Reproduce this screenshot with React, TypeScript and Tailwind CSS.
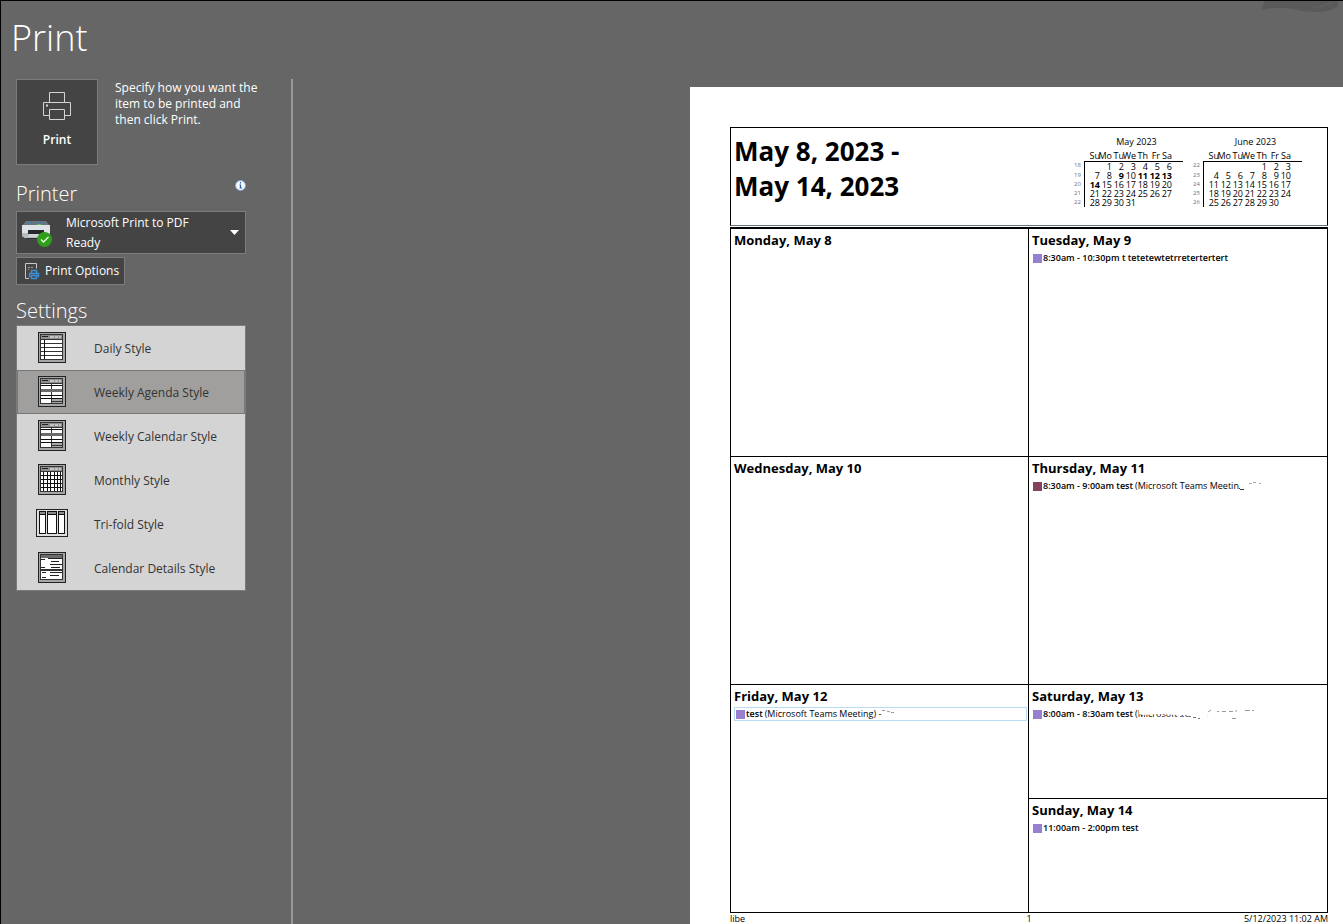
import { useState } from "react";
import clsx from "clsx";

type StyleId = "daily" | "agenda" | "weekly" | "monthly" | "trifold" | "details";

const printStyles: { id: StyleId; label: string }[] = [
  { id: "daily", label: "Daily Style" },
  { id: "agenda", label: "Weekly Agenda Style" },
  { id: "weekly", label: "Weekly Calendar Style" },
  { id: "monthly", label: "Monthly Style" },
  { id: "trifold", label: "Tri-fold Style" },
  { id: "details", label: "Calendar Details Style" },
];

const weekdays = ["Su", "Mo", "Tu", "We", "Th", "Fr", "Sa"];

function PrinterIcon() {
  return (
    <svg width="30" height="30" viewBox="0 0 30 30" fill="none" stroke="#d4d4d4">
      <path d="M7.500 11.500V1.500h15v10" />
      <path d="M7.500 24.500H1.500v-13h27v13h-6" />
      <path d="M7.500 18.500h15v10h-15z" />
      <path d="M4 14.500h2" strokeWidth="2" />
    </svg>
  );
}

function PrinterReadyIcon() {
  return (
    <svg width="32" height="30" viewBox="0 0 32 30">
      <path d="M5 3h20l4 5H1z" fill="#6b737b" />
      <path d="M7 4.500h16" stroke="#2f7fb5" strokeDasharray="4 2" />
      <path d="M16 6.500h4" stroke="#5fc34a" />
      <path d="M1 7h28v11l-3 2H4l-3-2z" fill="#dfe3e8" />
      <path d="M1 15h28v3l-3 2H4l-3-2z" fill="#b4bac1" />
      <path d="M7 12h16v4H7z" fill="#26282b" />
      <path d="M8 16h14l1 3H7z" fill="#cfd4d9" />
      <path d="M6 20h16v1H6z" fill="#2c2e31" />
      <circle cx="23.500" cy="21.500" r="7.500" fill="#2f9e1b" />
      <path d="M20 21.500l2.500 2.500 5-5" fill="none" stroke="#e8ffe2" strokeWidth="1.300" />
    </svg>
  );
}

function OptionsIcon() {
  return (
    <svg width="15" height="17" viewBox="0 0 15 17" fill="none">
      <path d="M4 15.500H.500V.500h11v5" stroke="#c9c9c9" />
      <path d="M3 4.500h2M3 6.500h1M6 4.500h2" stroke="#a0a0a0" />
      <path d="M6.500 10V7.500h5V10M5.500 13.500h-1v-3h9v3h-1M6.500 12.500h5v3h-5z" stroke="#3f8ed8" strokeWidth="1.400" />
    </svg>
  );
}

function InfoIcon() {
  return (
    <svg width="11" height="11" viewBox="0 0 11 11">
      <circle cx="5.500" cy="5.500" r="5" fill="#f4f8ff" stroke="#7f9fd0" />
      <path d="M5.500 2v1.500M4.500 5h1v3M4.500 8h2.500" stroke="#2d5fa8" strokeWidth="1.200" fill="none" />
    </svg>
  );
}

function StyleIcon({ id }: { id: StyleId }) {
  if (id === "trifold") {
    return (
      <svg width="32" height="28" viewBox="0 0 32 28" shapeRendering="crispEdges">
        <path d="M0 0h32v28H0z" fill="#222" />
        <path d="M1 1h30v26H1z" fill="#dedede" />
        <path d="M3 2h7v23H3zM11 2h10v23H11zM22 2h7v23h-7z" fill="#111" />
        <path d="M4 6h5v18H4zM12 6h8v18h-8zM23 6h5v18h-5z" fill="#fff" />
        <path d="M4 3h5v2H4zM12 3h8v2h-8zM23 3h5v2h-5z" fill="#8a8a8a" />
      </svg>
    );
  }
  return (
    <svg width="28" height="31" viewBox="0 0 28 31" shapeRendering="crispEdges">
      <path d="M0 0h28v31H0z" fill="#222" />
      <path d="M1 1h26v29H1z" fill="#a6a6a6" />
      <path d="M2 2h23v26H2z" fill="#333" />
      <path d="M3 3h21v4H3z" fill="#8f8f8f" />
      <path d="M4 4h6v1H4z" fill="#222" />
      <path d="M12 4h4v2h-4zM17 4h3v2h-3zM21 4h2v2h-2z" fill="#c4c4c4" />
      {id === "daily" && (
        <>
          <path d="M3 8h3v19H3zM7 8h17v19H7z" fill="#fff" />
          <path d="M3 11.500h21M3 15.500h21M3 19.500h21M3 23.500h21" stroke="#333" />
          <path d="M6.500 8v19" stroke="#111" strokeWidth="1" />
        </>
      )}
      {(id === "agenda" || id === "weekly") && (
        <>
          <path d="M3 8h10v19H3zM14 8h10v19H14z" fill="#fff" />
          <path d="M3 9.500h21M3 19.500h21M3 22.500h21" stroke="#111" />
          <path d="M3 13h21v3H3z" fill="#6b6b6b" />
          <path d="M14 23h10v4H14z" fill="#aaa" />
          <path d="M14 25.500h10" stroke="#333" />
        </>
      )}
      {id === "monthly" && (
        <>
          <path d="M3 8h21v19H3z" fill="#fff" />
          <path
            d="M5.500 8v19M9.500 8v19M12.500 8v19M16.500 8v19M19.500 8v19M22.500 8v19M3 11.500h21M3 15.500h21M3 19.500h21M3 23.500h21"
            stroke="#111"
          />
        </>
      )}
      {id === "details" && (
        <>
          <path d="M3 3h21v3H3z" fill="#6b6b6b" />
          <path d="M3 6h21v11H3zM3 19h21v8H3z" fill="#fff" />
          <path
            d="M3 7.500h4M10 6.500h14M13 9.500h8M12 12.500h12M13 15.500h9M3 15.500h4M4 20.500h4M12 20.500h12M12 23.500h9M4 25.500h4"
            stroke="#222"
          />
        </>
      )}
    </svg>
  );
}

type MiniProps = {
  title: string;
  firstWeek: number;
  offset: number;
  days: number;
  bold?: number[];
};

function MiniCalendar({ title, firstWeek, offset, days, bold = [] }: MiniProps) {
  const rows = Array.from({ length: 5 }, (_, r) =>
    Array.from({ length: 7 }, (_, c) => {
      const day = r * 7 + c + 1 - offset;
      return day > 0 && day <= days ? day : null;
    }),
  );

  return (
    <table className="w-[109px] table-fixed border-collapse text-[9px] leading-[9px]">
      <caption className="pb-1 pl-4 text-center leading-[10px]">{title}</caption>
      <colgroup>
        <col className="w-[10px]" />
        <col className="w-4" />
        {weekdays.slice(1).map((d) => (
          <col key={d} className="w-3" />
        ))}
        <col />
      </colgroup>
      <thead>
        <tr className="h-[10px]">
          <td />
          {weekdays.map((d) => (
            <th key={d} scope="col" className="border-b border-black p-0 align-top font-normal">
              <div className="flex justify-end">{d}</div>
            </th>
          ))}
          <td className="border-b border-black p-0" />
        </tr>
      </thead>
      <tbody>
        {rows.map((row, r) => (
          <tr key={r} className="h-[9px]">
            <th
              scope="row"
              className="border-r border-black p-0 text-left align-top text-[6px] font-normal leading-[9px] text-gray-500"
            >
              {firstWeek + r}
            </th>
            {row.map((day, c) => (
              <td key={c} className={clsx("p-0 align-bottom", day && bold.includes(day) && "font-bold")}>
                <div className="flex justify-end">{day}</div>
              </td>
            ))}
            <td className="p-0" />
          </tr>
        ))}
      </tbody>
    </table>
  );
}

type EventProps = {
  time?: string;
  title: string;
  note?: string;
  color?: string;
  selected?: boolean;
  children?: React.ReactNode;
};

function EventRow({ time, title, note, color = "bg-[#9880d0]", selected, children }: EventProps) {
  return (
    <div
      className={clsx(
        "flex h-[14px] items-center whitespace-nowrap pl-px text-[9px] leading-3",
        selected && "-mr-0.5 border border-[#b9dcf2]",
      )}
    >
      <span className={clsx("mr-px h-[9px] w-[9px] shrink-0", color)} />
      <span className="font-semibold">
        {time && `${time} `}
        {title}
      </span>
      {note && <span className="ml-0.5">{note}</span>}
      {children}
    </div>
  );
}

function DayCell({ title, children, className }: { title: string; children?: React.ReactNode; className?: string }) {
  return (
    <section className={clsx("px-[3px] pt-px", className)}>
      <h3 className="mb-px text-[13px] font-bold leading-5">{title}</h3>
      {children}
    </section>
  );
}

function Sheet() {
  return (
    <article className="mt-2 flex min-w-[640px] flex-1 flex-col bg-white pl-10 pr-[15px] pt-10 text-black">
      <header className="mb-px flex h-[99px] justify-between border border-b-gray-500 border-black pl-[3px] pr-[25px]">
        <h2 className="pt-1.5 text-[26px] font-bold leading-[35px]">
          May 8, 2023 -
          <br />
          May 14, 2023
        </h2>
        <div className="flex items-start gap-[10px] pt-[9px]">
          <MiniCalendar title="May 2023" firstWeek={18} offset={1} days={31} bold={[9, 11, 12, 13, 14]} />
          <MiniCalendar title="June 2023" firstWeek={22} offset={4} days={30} />
        </div>
      </header>
      <div className="grid flex-1 grid-cols-2 grid-rows-[228px_228px_1fr] border-x border-b border-t-2 border-black">
        <DayCell title="Monday, May 8" className="border-b border-r border-black" />
        <DayCell title="Tuesday, May 9" className="border-b border-black">
          <EventRow time="8:30am - 10:30pm" title="t tetetewtetrretertertert" />
        </DayCell>
        <DayCell title="Wednesday, May 10" className="border-b border-r border-black" />
        <DayCell title="Thursday, May 11" className="border-b border-black">
          <EventRow time="8:30am - 9:00am" title="test" note="(Microsoft Teams Meetin" color="bg-[#84425c]">
            <svg width="24" height="12" viewBox="0 0 24 12" fill="none" stroke="#777">
              <path d="M0 8l2 2M2 9.500h3" stroke="#333" />
              <path d="M10 3.500h3M14 2.500h3M20 3.500h2" stroke="#aaa" />
            </svg>
          </EventRow>
        </DayCell>
        <DayCell title="Friday, May 12" className="border-r border-black">
          <EventRow title="test" note="(Microsoft Teams Meeting) -" selected>
            <svg width="26" height="12" viewBox="0 0 26 12" fill="none" stroke="#999">
              <path d="M1 2.500h3M6 3l3 1M10 4.500h3" />
            </svg>
          </EventRow>
        </DayCell>
        <div className="grid grid-rows-[114px_1fr]">
          <DayCell title="Saturday, May 13" className="border-b border-black">
            <EventRow time="8:00am - 8:30am" title="test">
              <span className="relative ml-0.5">
                (Microsoft Teams
                <svg className="absolute left-0 top-0" width="124" height="12" viewBox="0 0 124 12" fill="none">
                  <path d="M4 0h68v12h-14l-4-5h-10l-22-1-14 1-4-1z" fill="#fff" />
                  <path d="M45 8.500h4M51 8.500h5M58 9.500h3M63 10.500h2" stroke="#777" />
                  <path d="M73 4l3-2M82 3.500h2M87 3.500h4M94 3.500h4M100 3h2M110 2.500h5M117 2.500h2M97 10.500h4" stroke="#999" />
                </svg>
              </span>
            </EventRow>
          </DayCell>
          <DayCell title="Sunday, May 14">
            <EventRow time="11:00am - 2:00pm" title="test" />
          </DayCell>
        </div>
      </div>
      <footer className="grid h-[11px] grid-cols-3 text-[9px] leading-[11px]">
        <span>libe</span>
        <span className="text-center">1</span>
        <span className="text-right">5/12/2023 11:02 AM</span>
      </footer>
    </article>
  );
}

export default function App() {
  const [selected, setSelected] = useState<StyleId>("agenda");

  return (
    <div className="relative flex min-h-screen flex-col border-l border-t border-black bg-[#666] font-['Open_Sans','Noto_Sans',sans-serif] text-white">
      <svg className="absolute right-0 top-0" width="82" height="12" viewBox="0 0 82 12">
        <path d="M4 0h74l-2 6c-8 5-20 6-34 4C28 7 16 5 0 9z" fill="#5a5a5a" />
        <path d="M52 7c8-1 14-3 18-6" stroke="#666" fill="none" />
      </svg>

      <header className="h-[78px] pl-2.5 pt-2.5">
        <h1 className="text-4xl font-light leading-[54px]">Print</h1>
      </header>

      <main className="flex flex-1">
        {/* Options */}
        <aside className="w-[292px] shrink-0 border-r-2 border-[#999] pl-[15px] pr-[30px]">
          <div className="flex gap-[17px]">
            <button
              type="button"
              className="flex h-[86px] w-[82px] shrink-0 flex-col items-center border border-[#7c7c7c] bg-[#444] pt-[11px] text-xs font-semibold"
            >
              <PrinterIcon />
              <span className="mt-[11px] leading-4">Print</span>
            </button>
            <p className="whitespace-nowrap pt-px text-xs leading-4">
              Specify how you want the
              <br />
              item to be printed and
              <br />
              then click Print.
            </p>
          </div>

          <div className="mt-[15px] flex w-[230px] justify-between">
            <h2 className="text-xl font-light leading-7">
              <label htmlFor="printer">Printer</label>
            </h2>
            <button type="button" aria-label="Printer information" className="h-[11px]">
              <InfoIcon />
            </button>
          </div>

          <div className="mt-[3px] flex h-[43px] w-[230px] items-center border border-[#7c7c7c] bg-[#444] pl-1 pr-1.5 text-xs">
            <PrinterReadyIcon />
            <div className="ml-[13px] flex flex-1 flex-col leading-5">
              <select id="printer" className="h-5 w-full cursor-pointer appearance-none bg-transparent">
                <option>Microsoft Print to PDF</option>
              </select>
              <span>Ready</span>
            </div>
            <svg width="9" height="5" viewBox="0 0 9 5">
              <path d="M0 0h9L4.500 5z" fill="#fff" />
            </svg>
          </div>
          <button
            type="button"
            className="mt-[3px] flex h-7 items-center gap-[5px] border border-[#7c7c7c] bg-[#444] pl-2 pr-[5px] text-xs"
          >
            <OptionsIcon />
            Print Options
          </button>

          <h2 className="mt-3 text-xl font-light leading-7">Settings</h2>
          <ul className="w-[230px] border border-[#7c7c7c] bg-[#d4d4d4] text-xs text-[#333]">
            {printStyles.map((style) => (
              <li key={style.id}>
                <button
                  type="button"
                  aria-pressed={style.id === selected}
                  onClick={() => setSelected(style.id)}
                  className={clsx(
                    "flex h-11 w-full items-center border text-left",
                    style.id === selected ? "border-[#777] bg-[#a09f9d]" : "border-transparent",
                  )}
                >
                  <span className="flex w-[76px] shrink-0 justify-center pb-0.5 pr-2">
                    <StyleIcon id={style.id} />
                  </span>
                  <span className="pt-0.5">{style.label}</span>
                </button>
              </li>
            ))}
          </ul>
        </aside>

        {/* Preview */}
        <div className="flex flex-1 pl-[397px]">
          <Sheet />
        </div>
      </main>
    </div>
  );
}
